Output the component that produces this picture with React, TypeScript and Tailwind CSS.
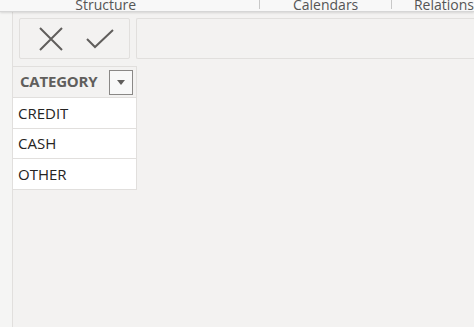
import React from "react";

export default function App() {
  const font = { fontFamily: '"Open Sans", "Noto Sans", sans-serif' };
  const rows: [string, string][] = [
    ["CREDIT", "h-[31px]"],
    ["CASH", "h-[30px]"],
    ["OTHER", "h-[31px]"],
  ];
  return (
    <div className="w-[474px] h-[327px] overflow-hidden bg-[#f3f2f1] relative" style={font}>
      {/* top tabs */}
      <div className="h-[12px] bg-[#f8f8f8] relative overflow-hidden border-b border-[#d6d6d6] shadow-[0_1px_2px_rgba(0,0,0,0.12)] z-10">
        <div className="flex items-start h-[12px]">
          <div className="w-[212px] flex justify-center">
            <span className="text-[14px] leading-[14px] text-[#555] -mt-[2px] block">Structure</span>
          </div>
          <div className="w-[48px]" />
          <div className="w-px h-[9px] bg-[#c8c8c8]" />
          <div className="w-[131px] flex justify-center">
            <span className="text-[14px] leading-[14px] text-[#555] -mt-[2px] block">Calendars</span>
          </div>
          <div className="w-px h-[9px] bg-[#c8c8c8]" />
          <div className="pl-[22px]">
            <span className="text-[14px] leading-[14px] text-[#555] -mt-[2px] block">Relations</span>
          </div>
        </div>
      </div>
      <div className="flex h-[315px]">
        <div className="w-[13px] border-r border-[#e1dfdd] bg-[#f5f5f4]" />
        <div className="flex-1 flex flex-col">
          {/* formula bar */}
          <div className="flex pt-[6px] pl-[6px] gap-[6px]">
            <div className="w-[111px] h-[41px] border border-[#e1dfdd] rounded-[2px] flex items-center">
              <svg width="26" height="26" viewBox="0 0 26 26" className="ml-[18px]">
                <path d="M2 2 L24 24 M24 2 L2 24" stroke="#605e5c" strokeWidth="2" fill="none" />
              </svg>
              <svg width="30" height="22" viewBox="0 0 30 22" className="ml-[21px]">
                <path d="M2 11 L10 19 L28 2" stroke="#605e5c" strokeWidth="2" fill="none" />
              </svg>
            </div>
            <div className="flex-1 h-[41px] border border-[#e1dfdd] border-r-0 rounded-l-[2px]" />
          </div>
          {/* table */}
          <div className="mt-[7px] w-[124px]">
            <div className="h-[31px] border-t border-r border-[#e1dfdd] bg-[#f3f2f1] flex items-center justify-between pl-[7px] pr-[3px]">
              <span className="text-[15px] font-bold text-[#605e5c] tracking-[-0.2px] -mt-[1px]">CATEGORY</span>
              <div className="w-[24px] h-[25px] border border-[#8a8886] bg-[#f8f8f8] flex items-center justify-center">
                <svg width="8" height="5" viewBox="0 0 8 5">
                  <path d="M0 0 L8 0 L4 5 Z" fill="#605e5c" />
                </svg>
              </div>
            </div>
            {rows.map(([t, h]) => (
              <div
                key={t}
                className={`${h} bg-white border-t border-r border-[#e1dfdd] flex items-center pl-[5px] text-[15px] text-[#252423]`}
              >
                {t}
              </div>
            ))}
            <div className="border-t border-[#e1dfdd] w-[124px]" />
          </div>
        </div>
      </div>
    </div>
  );
}
